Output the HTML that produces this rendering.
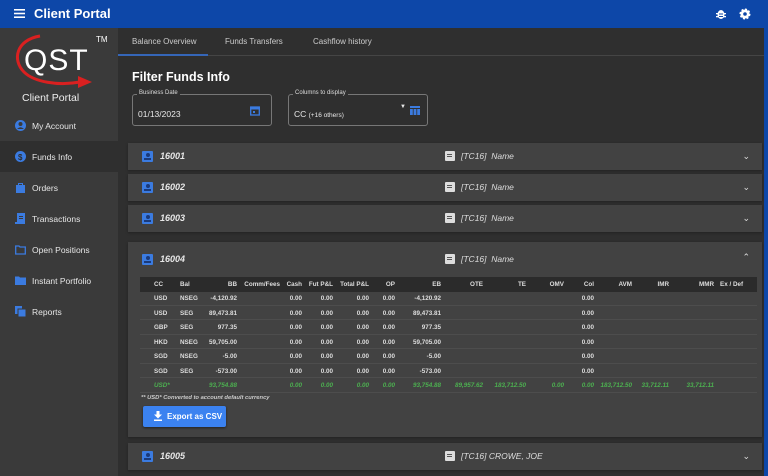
<!DOCTYPE html>
<html><head><meta charset="utf-8"><style>
*{box-sizing:border-box;margin:0;padding:0}
body{width:768px;height:476px;overflow:hidden;background:#2f2f2f;font-family:"Liberation Sans",sans-serif;color:#e8e8e8;position:relative}
.hdr{position:absolute;left:0;top:0;width:768px;height:28px;background:#0d47a8}
.hdr .t{position:absolute;left:34px;top:6px;font-size:13px;font-weight:bold;color:#fff}
.side{position:absolute;left:0;top:28px;width:118px;height:448px;background:#3a3a3a}
.nav{position:absolute;left:0;width:118px;height:31px;font-size:8.5px;color:#e6e6e6;display:flex;align-items:center}
.nav span{position:absolute;left:32px}
.nav svg{position:absolute;left:15px}
.main{position:absolute;left:118px;top:28px;width:646px;height:448px;background:#2f2f2f}
.rstrip{position:absolute;left:764px;top:28px;width:4px;height:448px;background:#0d47a8}
.tab{position:absolute;top:37px;font-size:8px;color:#ccc}
.panel{position:absolute;left:128px;width:634px;background:#424242;box-shadow:0 1px 2px #222}
.ph{position:absolute;left:0;top:0;width:634px;height:27px}
.id{position:absolute;left:32px;top:8px;font-size:9px;font-style:italic;font-weight:bold;color:#e8e8e8}
.nm{position:absolute;left:333px;top:8px;font-size:8.5px;font-style:italic;color:#ddd}
.ico{position:absolute;left:14px;top:8px;width:11px;height:11px;background:#3b7be0;border-radius:1px}
.ico:before{content:"";position:absolute;left:3.5px;top:2px;width:4px;height:4px;border-radius:50%;background:#1a3a7a}
.ico:after{content:"";position:absolute;left:2px;top:7px;width:7px;height:2px;background:#1a3a7a}
.nico{position:absolute;left:317px;top:8px;width:10px;height:10px;background:#ddd;border-radius:1px}
.nico:before{content:"";position:absolute;left:2px;top:3px;width:5px;height:1px;background:#555;box-shadow:0 2px 0 #555}
.chev{position:absolute;right:12px;top:8px;font-size:9px;color:#ddd}
.row{position:absolute;left:140px;width:617px;height:14.5px;font-size:6.3px;font-weight:bold;color:#ddd;border-bottom:1px solid #4d4d4d}
.row div{position:absolute;top:4px;text-align:right}
.hrow{background:#2b2b2b;border:none}
.grn{color:#4caf50;font-style:italic;border:none}
.fld{position:absolute;top:94px;height:32px;border:1px solid #777;border-radius:3px}
.fld .l{position:absolute;top:-5px;left:4px;background:#2f2f2f;padding:0 2px;font-size:6px;color:#ddd}
</style></head><body>
<div class="hdr">
<svg style="position:absolute;left:14px;top:9px" width="11" height="9"><rect y="0" width="11" height="1.6" fill="#fff"/><rect y="3.7" width="11" height="1.6" fill="#fff"/><rect y="7.4" width="11" height="1.6" fill="#fff"/></svg>
<div class="t">Client Portal</div>
<svg style="position:absolute;left:716px;top:8px" width="10" height="12"><ellipse cx="5" cy="6.5" rx="3.5" ry="4.5" fill="#fff"/><rect x="0" y="5" width="10" height="1.3" fill="#fff"/><rect x="0" y="8" width="10" height="1.3" fill="#fff"/><rect x="3" y="5.5" width="4" height="1" fill="#0d47a8"/><rect x="3" y="8" width="4" height="1" fill="#0d47a8"/></svg>
<svg style="position:absolute;left:739px;top:8px" width="12" height="12"><circle cx="6" cy="6" r="4.5" fill="#fff" stroke="#fff" stroke-width="2" stroke-dasharray="2 1.5"/><circle cx="6" cy="6" r="1.8" fill="#0d47a8"/></svg>
</div>
<div class="side">
<svg style="position:absolute;left:10px;top:2px" width="100" height="62">
<path d="M30 6 C6 10 2 30 14 42 C24 52 48 56 70 52" fill="none" stroke="#d92020" stroke-width="3"/>
<path d="M68 46 L82 52 L68 58 Z" fill="#d92020"/>
<text x="14" y="40" font-family="Liberation Sans" font-size="30" fill="#fff" letter-spacing="1">QST</text>
<text x="86" y="12" font-family="Liberation Sans" font-size="8" fill="#fff">TM</text>
</svg>
<div style="position:absolute;left:22px;top:64px;font-size:10.5px;color:#eee">Client Portal</div>
<div class="nav" style="top:82px"><svg width="11" height="11"><circle cx="5.5" cy="5.5" r="5.5" fill="#3b7be0"/><circle cx="5.5" cy="4" r="2" fill="#3a3a3a"/><path d="M2 9 Q5.5 5.5 9 9" fill="#3a3a3a"/></svg><span>My Account</span></div>
<div class="nav" style="top:113px;background:#2f2f2f"><svg width="11" height="11"><circle cx="5.5" cy="5.5" r="5.5" fill="#3b7be0"/><text x="3" y="9" font-size="8" fill="#2f2f2f" font-weight="bold">$</text></svg><span>Funds Info</span></div>
<div class="nav" style="top:144px"><svg width="11" height="11"><rect x="1" y="3" width="9" height="8" fill="#3b7be0"/><path d="M3.5 3 V1.5 H7.5 V3" fill="none" stroke="#3b7be0"/></svg><span>Orders</span></div>
<div class="nav" style="top:175px"><svg width="11" height="11"><rect x="2" y="0" width="8" height="9" fill="#3b7be0"/><rect x="0" y="9" width="10" height="2" fill="#3b7be0"/><rect x="4" y="3" width="4" height="1" fill="#3a3a3a"/><rect x="4" y="5" width="4" height="1" fill="#3a3a3a"/></svg><span>Transactions</span></div>
<div class="nav" style="top:206px"><svg width="11" height="11"><path d="M0.7 2 H4 L5 3 H10.3 V10 H0.7 Z" fill="none" stroke="#3b7be0" stroke-width="1.3"/></svg><span>Open Positions</span></div>
<div class="nav" style="top:237px"><svg width="11" height="11"><path d="M0 1.5 H4 L5 2.5 H11 V10 H0 Z" fill="#3b7be0"/></svg><span>Instant Portfolio</span></div>
<div class="nav" style="top:268px"><svg width="11" height="11"><rect x="0" y="0" width="7" height="8" fill="#3b7be0"/><rect x="3" y="3" width="8" height="8" fill="#3b7be0" stroke="#3a3a3a"/></svg><span>Reports</span></div>
</div>
<div class="main"></div>
<div class="rstrip"></div>
<div style="position:absolute;left:118px;top:55px;width:646px;height:1px;background:#454545"></div>
<div style="position:absolute;left:118px;top:54px;width:90px;height:2px;background:#3566b8"></div>
<div class="tab" style="left:132px">Balance Overview</div>
<div class="tab" style="left:225px">Funds Transfers</div>
<div class="tab" style="left:313px">Cashflow history</div>
<div style="position:absolute;left:132px;top:70px;font-size:12.5px;font-weight:bold;color:#fff">Filter Funds Info</div>
<div class="fld" style="left:132px;width:140px"><div class="l">Business Date</div><div style="position:absolute;left:5px;top:14px;font-size:8.5px">01/13/2023</div>
<svg style="position:absolute;left:117px;top:10px" width="10" height="11"><rect x="0.7" y="2" width="8.6" height="8" fill="none" stroke="#3b7be0" stroke-width="1.3"/><rect x="0" y="2" width="10" height="2.5" fill="#3b7be0"/><rect x="3" y="6" width="2" height="2" fill="#3b7be0"/></svg></div>
<div class="fld" style="left:288px;width:140px"><div class="l">Columns to display</div><div style="position:absolute;left:5px;top:14px;font-size:8.5px">CC <span style="font-size:6.5px">(+16 others)</span></div>
<div style="position:absolute;left:111px;top:9px;font-size:6px">▼</div>
<svg style="position:absolute;left:121px;top:11px" width="10" height="9"><rect width="10" height="2" fill="#3b7be0"/><rect y="3" width="2.8" height="6" fill="#3b7be0"/><rect x="3.6" y="3" width="2.8" height="6" fill="#3b7be0"/><rect x="7.2" y="3" width="2.8" height="6" fill="#3b7be0"/></svg></div>

<div class="panel" style="top:143px;height:27px"><div class="ph"><div class="ico"></div><div class="id">16001</div><div class="nico"></div><div class="nm">[TC16]&nbsp; Name</div><div class="chev">⌄</div></div></div>
<div class="panel" style="top:174px;height:27px"><div class="ph"><div class="ico"></div><div class="id">16002</div><div class="nico"></div><div class="nm">[TC16]&nbsp; Name</div><div class="chev">⌄</div></div></div>
<div class="panel" style="top:205px;height:27px"><div class="ph"><div class="ico"></div><div class="id">16003</div><div class="nico"></div><div class="nm">[TC16]&nbsp; Name</div><div class="chev">⌄</div></div></div>
<div class="panel" style="top:242px;height:195px"><div class="ph" style="top:4px"><div class="ico"></div><div class="id">16004</div><div class="nico"></div><div class="nm">[TC16]&nbsp; Name</div><div class="chev" style="top:6px">⌃</div></div></div>
<div class="panel" style="top:443px;height:27px"><div class="ph"><div class="ico"></div><div class="id">16005</div><div class="nico"></div><div class="nm">[TC16] CROWE, JOE</div><div class="chev">⌄</div></div></div>

<div class="row hrow" style="top:277px"><div style="left:14px">CC</div><div style="left:40px">Bal</div><div style="right:520px">BB</div><div style="right:477px">Comm/Fees</div><div style="right:455px">Cash</div><div style="right:424px">Fut P&amp;L</div><div style="right:388px">Total P&amp;L</div><div style="right:362px">OP</div><div style="right:316px">EB</div><div style="right:274px">OTE</div><div style="right:231px">TE</div><div style="right:193px">OMV</div><div style="right:163px">Col</div><div style="right:125px">AVM</div><div style="right:88px">IMR</div><div style="right:43px">MMR</div><div style="left:580px">Ex / Def</div></div>

<div class="row" style="top:291px"><div style="left:14px">USD</div><div style="left:40px">NSEG</div><div style="right:520px">-4,120.92</div><div style="right:455px">0.00</div><div style="right:424px">0.00</div><div style="right:388px">0.00</div><div style="right:362px">0.00</div><div style="right:316px">-4,120.92</div><div style="right:163px">0.00</div></div>
<div class="row" style="top:305.5px"><div style="left:14px">USD</div><div style="left:40px">SEG</div><div style="right:520px">89,473.81</div><div style="right:455px">0.00</div><div style="right:424px">0.00</div><div style="right:388px">0.00</div><div style="right:362px">0.00</div><div style="right:316px">89,473.81</div><div style="right:163px">0.00</div></div>
<div class="row" style="top:320px"><div style="left:14px">GBP</div><div style="left:40px">SEG</div><div style="right:520px">977.35</div><div style="right:455px">0.00</div><div style="right:424px">0.00</div><div style="right:388px">0.00</div><div style="right:362px">0.00</div><div style="right:316px">977.35</div><div style="right:163px">0.00</div></div>
<div class="row" style="top:334.5px"><div style="left:14px">HKD</div><div style="left:40px">NSEG</div><div style="right:520px">59,705.00</div><div style="right:455px">0.00</div><div style="right:424px">0.00</div><div style="right:388px">0.00</div><div style="right:362px">0.00</div><div style="right:316px">59,705.00</div><div style="right:163px">0.00</div></div>
<div class="row" style="top:349px"><div style="left:14px">SGD</div><div style="left:40px">NSEG</div><div style="right:520px">-5.00</div><div style="right:455px">0.00</div><div style="right:424px">0.00</div><div style="right:388px">0.00</div><div style="right:362px">0.00</div><div style="right:316px">-5.00</div><div style="right:163px">0.00</div></div>
<div class="row" style="top:363.5px"><div style="left:14px">SGD</div><div style="left:40px">SEG</div><div style="right:520px">-573.00</div><div style="right:455px">0.00</div><div style="right:424px">0.00</div><div style="right:388px">0.00</div><div style="right:362px">0.00</div><div style="right:316px">-573.00</div><div style="right:163px">0.00</div></div>
<div class="row grn" style="top:378px;border-bottom:1px solid #4d4d4d"><div style="left:14px">USD*</div><div style="right:520px">93,754.88</div><div style="right:455px">0.00</div><div style="right:424px">0.00</div><div style="right:388px">0.00</div><div style="right:362px">0.00</div><div style="right:316px">93,754.88</div><div style="right:274px">89,957.62</div><div style="right:231px">183,712.50</div><div style="right:193px">0.00</div><div style="right:163px">0.00</div><div style="right:125px">183,712.50</div><div style="right:88px">33,712.11</div><div style="right:43px">33,712.11</div></div>
<div style="position:absolute;left:141px;top:395px;font-size:5.8px;font-style:italic;font-weight:bold;color:#ccc">** USD* Converted to account default currency</div>
<div style="position:absolute;left:143px;top:406px;width:83px;height:21px;background:#3b82f0;border-radius:2px;box-shadow:0 1px 2px #222">
<svg style="position:absolute;left:11px;top:5px" width="8" height="10"><path d="M2.5 0 H5.5 V3.5 H8 L4 7.5 L0 3.5 H2.5 Z" fill="#fff"/><rect y="8.5" width="8" height="1.5" fill="#fff"/></svg>
<div style="position:absolute;left:24px;top:6px;font-size:8px;font-weight:bold;color:#fff">Export as CSV</div></div>
</body></html>
